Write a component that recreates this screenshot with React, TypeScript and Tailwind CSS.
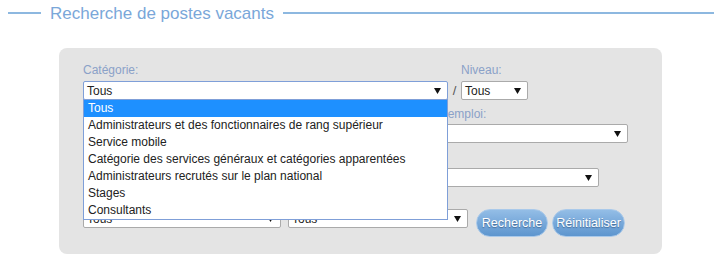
import React from "react";

const Arrow = () => (
  <svg width="7" height="6" viewBox="0 0 7 6" className="shrink-0">
    <polygon points="0,0 7,0 3.5,6" fill="#111" />
  </svg>
);

const Select = ({
  value = "Tous",
  className = "",
  focused = false,
}: {
  value?: string;
  className?: string;
  focused?: boolean;
}) => (
  <div
    className={`h-[19px] bg-white rounded-[2px] border flex items-center justify-between pl-[3px] pr-[6px] text-[12px] text-[#222] leading-none ${
      focused ? "border-[#7f9fd8]" : "border-[#aaaaaa]"
    } ${className}`}
  >
    <span>{value}</span>
    <Arrow />
  </div>
);

const Label = ({ children }: { children?: React.ReactNode }) => (
  <div className="h-[16px] leading-[16px] text-[12px] text-[#8aa1c8] whitespace-nowrap">{children}</div>
);

const options = [
  "Tous",
  "Administrateurs et des fonctionnaires de rang supérieur",
  "Service mobile",
  "Catégorie des services généraux et catégories apparentées",
  "Administrateurs recrutés sur le plan national",
  "Stages",
  "Consultants",
];

export default function App() {
  return (
    <div
      className="w-[724px] h-[268px] bg-white overflow-hidden"
      style={{ fontFamily: '"Liberation Sans", Arial, sans-serif' }}
    >
      <div className="h-[26px] flex items-center pl-[8px] pr-[10px]">
        <div className="w-[33px] h-[2px] bg-[#8db8e0]" />
        <div className="mx-[9px] text-[17px] text-[#7aa7d9] leading-none whitespace-nowrap">
          Recherche de postes vacants
        </div>
        <div className="flex-1 h-[2px] bg-[#8db8e0]" />
      </div>

      <div className="ml-[59px] mt-[22px] w-[603px] h-[206px] bg-[#e4e4e4] rounded-[8px] relative pl-[24px] pt-[14px] flex flex-col">
        {/* Row 1 */}
        <div className="flex items-end">
          <div className="w-[365px] flex flex-col gap-[3px]">
            <Label>Catégorie:</Label>
            <Select focused />
          </div>
          <div className="w-[13px] h-[19px] flex items-center justify-center text-[13px] text-[#555]">/</div>
          <div className="w-[67px] flex flex-col gap-[3px]">
            <Label>Niveau:</Label>
            <Select />
          </div>
        </div>

        {/* Row 2 */}
        <div className="flex mt-[6px]">
          <div className="w-[311px] flex flex-col gap-[2px]">
            <Label />
            <Select className="w-[300px]" value="" />
          </div>
          <div className="w-[234px] flex flex-col gap-[2px]">
            <Label>Réseau d'emploi:</Label>
            <Select value="" />
          </div>
        </div>

        {/* Row 3 */}
        <div className="flex flex-col gap-[1px] mt-[8px] w-[516px]">
          <Label />
          <Select value="" />
        </div>

        {/* Row 4 */}
        <div className="flex items-start mt-[4px]">
          <div className="w-[198px] flex flex-col gap-[2px]">
            <Label />
            <Select />
          </div>
          <div className="w-[180px] ml-[7px] flex flex-col gap-[2px]">
            <Label />
            <Select />
          </div>
          <div className="flex gap-[4px] ml-[8px] mt-[18px]">
            <button className="w-[72px] h-[28px] rounded-full bg-gradient-to-b from-[#93bde6] to-[#5d95ce] border border-[#a9c9ea] text-white text-[12.5px] [text-shadow:0_1px_1px_rgba(40,70,110,0.6)]">
              Recherche
            </button>
            <button className="w-[73px] h-[28px] rounded-full bg-gradient-to-b from-[#93bde6] to-[#5d95ce] border border-[#a9c9ea] text-white text-[12.5px] [text-shadow:0_1px_1px_rgba(40,70,110,0.6)]">
              Réinitialiser
            </button>
          </div>
        </div>

        {/* Open dropdown list */}
        <div className="absolute left-[24px] top-[51px] w-[365px] bg-white border border-[#7f9fd8] flex flex-col">
          {options.map((o, i) => (
            <div
              key={o}
              className={`h-[17px] leading-[17px] pl-[4px] text-[12px] whitespace-nowrap ${
                i === 0 ? "bg-[#1e90ff] text-white" : "text-[#222]"
              }`}
            >
              {o}
            </div>
          ))}
        </div>
      </div>
    </div>
  );
}
